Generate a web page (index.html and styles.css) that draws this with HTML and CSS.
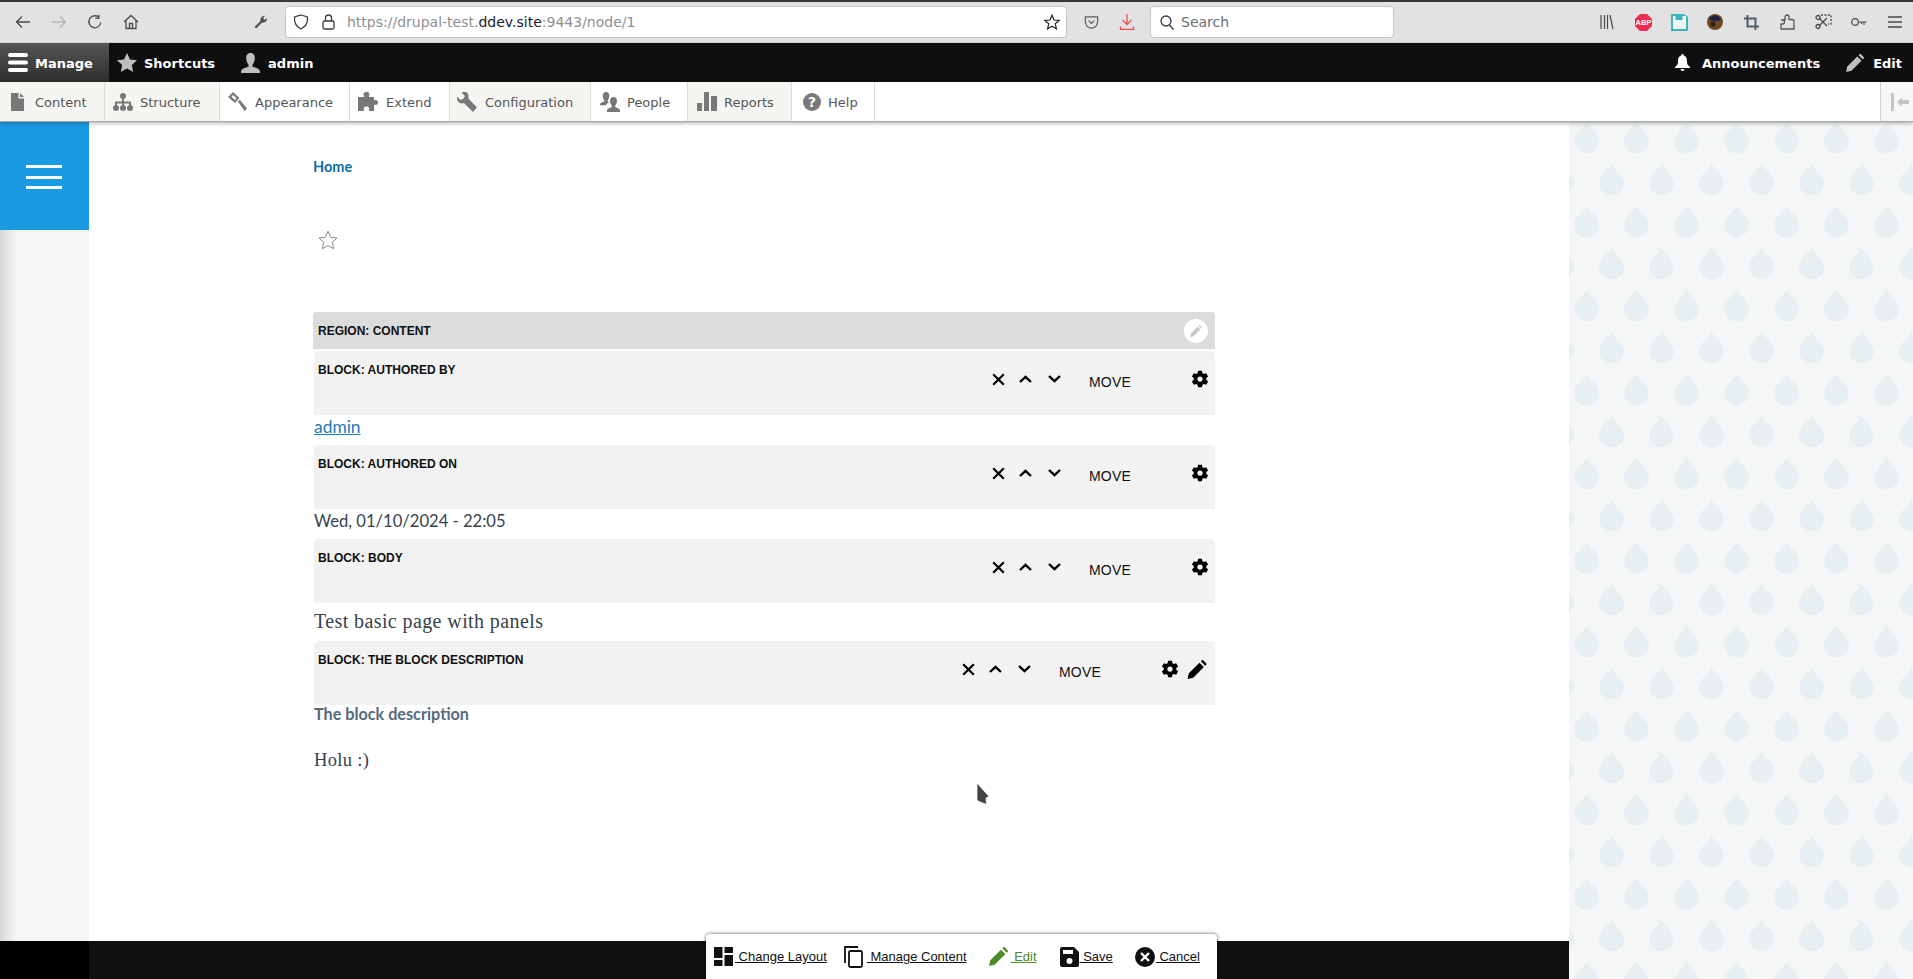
FILE: index.html
```html
<!DOCTYPE html>
<html lang="en">
<head>
<meta charset="utf-8">
<title>Test basic page with panels</title>
<link rel="stylesheet" href="styles.css">
</head>
<body>
<svg class="defs" width="0" height="0" aria-hidden="true">
  <defs>
    <symbol id="i-x" viewBox="0 0 13 13"><path d="M1.2 1.2 11.8 11.8M11.8 1.2 1.2 11.8" fill="none" stroke="#000" stroke-width="2.2"/></symbol>
    <symbol id="i-up" viewBox="0 0 13 8"><path d="M1 7 6.5 1.8 12 7" fill="none" stroke="#000" stroke-width="2.4"/></symbol>
    <symbol id="i-down" viewBox="0 0 13 8"><path d="M1 1 6.5 6.2 12 1" fill="none" stroke="#000" stroke-width="2.4"/></symbol>
    <symbol id="i-gear" viewBox="0 0 24 24"><path fill="#000" fill-rule="evenodd" d="M14.6 1h-5.2l-.6 3.2c-.7.3-1.3.6-1.9 1.1L3.8 4.2 1.2 8.7l2.5 2.1c-.1.7-.1 1.5 0 2.2l-2.5 2.2 2.6 4.5 3.1-1.1c.6.5 1.2.8 1.9 1.1l.6 3.3h5.2l.6-3.3c.7-.3 1.3-.6 1.9-1.1l3.1 1.1 2.6-4.5-2.5-2.2c.1-.7.1-1.5 0-2.2l2.5-2.1-2.6-4.500-3.100 1.100c-.6-.5-1.2-.8-1.9-1.100zM12 8.500a3.500 3.500 0 1 1 0 7 3.500 3.500 0 0 1 0-7z"/></symbol>
    <symbol id="i-pencil" viewBox="0 0 20 20"><path d="M0 20 1.4 14 12.6 2.8 17.2 7.4 6 18.6zM14 1.4 15 .4c.5-.5 1.2-.5 1.7 0l2.9 2.9c.5.5.5 1.2 0 1.7l-1 1z"/></symbol>
  </defs>
</svg>

<header class="browser">
  <div class="nav-group">
    <span class="bbtn"><svg width="16" height="16" viewBox="0 0 16 16" fill="none" stroke="#4a4a4f" stroke-width="1.3"><path d="M15 8H1.5M7 2.5 1.5 8 7 13.5"/></svg></span>
    <span class="bbtn"><svg width="16" height="16" viewBox="0 0 16 16" fill="none" stroke="#b4b4b6" stroke-width="1.3"><path d="M1 8h13.5M9 2.5 14.500 8 9 13.5"/></svg></span>
    <span class="bbtn"><svg width="16" height="16" viewBox="0 0 16 16" fill="none" stroke="#4a4a4f" stroke-width="1.3"><path d="M13.800 8.500A6 6 0 1 1 11.500 3M11.800 .8v3.500H8.300"/></svg></span>
    <span class="bbtn"><svg width="16" height="16" viewBox="0 0 16 16" fill="none" stroke="#4a4a4f" stroke-width="1.3"><path d="M1 8 8 1.500 15 8M3 6.500V14.500H13V6.500M6.500 14.500V9.500H9.500V14.500"/></svg></span>
    <span class="bbtn wrench"><svg width="14" height="14" viewBox="0 0 14 14"><path fill="#4a4a4f" d="M.5 12 6.500 6C6 3.500 7.800.8 11 .8l-2 2.400 1.800 1.800L13 3c.2 3.200-2.500 5.200-5 4.600L2 13.500z"/></svg></span>
  </div>
  <div class="urlbar">
    <svg class="ub-shield" width="16" height="16" viewBox="0 0 16 16" fill="none" stroke="#3d3d40" stroke-width="1.3"><path d="M8 1 14.500 3C15 9 12 13 8 15 4 13 1 9 1.500 3z"/></svg>
    <svg class="ub-lock" width="13" height="16" viewBox="0 0 13 16" fill="none" stroke="#3d3d40" stroke-width="1.3"><rect x="1" y="7" width="11" height="8" rx="1.500"/><path d="M3.500 7V4a3 3 0 0 1 6 0v3"/></svg>
    <span class="url">https://drupal-test.<b>ddev.site</b>:9443/node/1</span>
    <svg class="ub-star" width="16" height="16" viewBox="0 0 16 16" fill="none" stroke="#222" stroke-width="1.200"><path d="M8 1.200 10 6l5.200.4-4 3.400 1.300 5.100L8 12.200l-4.500 2.700 1.300-5.100-4-3.400L6 6z"/></svg>
  </div>
  <span class="bbtn"><svg width="15" height="15" viewBox="0 0 16 16" fill="none" stroke="#5b5b60" stroke-width="1.300"><path d="M1.500 2h13c.5 4 .500 12-6.500 12S1 6 1.500 2zM5 6l3 3 3-3"/></svg></span>
  <span class="bbtn"><svg width="16" height="16" viewBox="0 0 16 16" fill="none" stroke="#f0504a" stroke-width="1.300"><path d="M8 0v10.500M3.500 6 8 10.500 12.500 6M1.500 12.500v2.800h13v-2.800"/></svg></span>
  <div class="searchbar">
    <svg width="14" height="15" viewBox="0 0 14 15" fill="none" stroke="#3d3d40" stroke-width="1.300"><circle cx="6" cy="6" r="5"/><path d="m9.500 10 4 4.500"/></svg>
    <span class="search-text">Search</span>
  </div>
  <div class="right-group">
    <span class="bbtn"><svg width="14" height="16" viewBox="0 0 14 16" fill="none" stroke="#4a4a4f" stroke-width="1.200"><path d="M1 1v14M4.500 1v14M7.500 1v14M10 1l3 14"/></svg></span>
    <span class="bbtn"><svg width="17" height="17" viewBox="0 0 17 17"><path fill="#ee2b50" d="M5 0h7l5 5v7l-5 5H5l-5-5V5z"/><text x="8.500" y="11" class="abp">ABP</text></svg></span>
    <span class="bbtn"><svg width="17" height="17" viewBox="0 0 17 17"><path fill="#3fb5b8" d="M0 0h13l4 3v14H0z"/><rect x="2" y="2" width="13" height="13" fill="#eef6f6"/><rect x="4.500" y="0" width="7" height="6" fill="#3fb5b8"/></svg></span>
    <span class="bbtn"><svg width="16" height="16" viewBox="0 0 16 16"><circle cx="8" cy="8" r="8" fill="#6e4a24"/><path d="M2 5a7 7 0 0 1 12 0c-2 3-9 3-12 0z" fill="#1b2243"/><circle cx="6" cy="10" r="2.500" fill="#2c1d10"/></svg></span>
    <span class="bbtn"><svg width="15" height="15" viewBox="0 0 15 15" fill="none" stroke="#4e5d6c" stroke-width="2"><path d="M3.500 0v11.500H15M0 3.500h11.500V15"/></svg></span>
    <span class="bbtn"><svg width="15" height="16" viewBox="0 0 15 16" fill="none" stroke="#55555a" stroke-width="1.300"><path d="M1 15V10h1.500a2 2 0 0 0 0-4H1v0h4V3a2 2 0 0 1 4 0v2.500h3c1 0 2 1 2 2V15z"/></svg></span>
    <span class="bbtn"><svg width="17" height="16" viewBox="0 0 17 16" fill="none" stroke="#4a4a4f" stroke-width="1.300"><path d="M6 1h10v9h-3" stroke-dasharray="2 1.500"/><circle cx="3" cy="3.500" r="2"/><circle cx="3" cy="12.500" r="2"/><path d="M4.500 4.500 12 12M4.500 11.500 12 4"/></svg></span>
    <span class="bbtn"><svg width="16" height="10" viewBox="0 0 16 10" fill="none" stroke="#4a4a4f" stroke-width="1.200"><circle cx="4" cy="5" r="3.300"/><path d="M7.300 5H15.500M13 5v3M10.500 5v2"/></svg></span>
    <span class="bbtn"><svg width="14" height="12" viewBox="0 0 14 12" fill="none" stroke="#4a4a4f" stroke-width="1.300"><path d="M0 1h14M0 6h14M0 11h14"/></svg></span>
  </div>
</header>

<nav class="toolbar">
  <a class="tab tab-manage"><svg width="20" height="19" viewBox="0 0 20 19" fill="#fff"><rect y="0" width="20" height="4" rx="2"/><rect y="7.500" width="20" height="4" rx="2"/><rect y="15" width="20" height="4" rx="2"/></svg><span>Manage</span></a>
  <a class="tab tab-short"><svg width="20" height="19" viewBox="0 0 20 19" fill="#bfbfbf"><path d="M10 0l3 6.500 7 .8-5.200 4.700 1.400 7L10 15.500 3.800 19l1.400-7L0 7.300l7-.8z"/></svg><span>Shortcuts</span></a>
  <a class="tab tab-admin"><svg width="19" height="20" viewBox="0 0 19 20" fill="#bfbfbf"><path d="M9.500 0c3 0 4.300 2.300 4.300 5 0 3-1.300 5.500-2.300 6.500v2.200c3 .8 7.500 2 7.500 5V20H0v-1.300c0-3 4.500-4.200 7.500-5v-2.200C6.500 10.500 5.200 8 5.200 5c0-2.700 1.300-5 4.300-5z"/></svg><span>admin</span></a>
  <div class="tb-right">
    <a class="tab tab-ann"><svg width="15" height="17" viewBox="0 0 15 17" fill="#fff"><path d="M7.500 0c1 0 1.300.7 1.300 1.500C11.500 2.300 12 5 12 8c0 2 1 3.500 3 5v1H0v-1c2-1.500 3-3 3-5 0-3 .5-5.700 3.200-6.500C6.200.7 6.500 0 7.500 0zM5.500 15h4a2 2 0 0 1-4 0z"/></svg><span>Announcements</span></a>
    <a class="tab tab-edit"><svg width="18" height="18" viewBox="0 0 20 20" fill="#bfbfbf"><use href="#i-pencil"/></svg><span>Edit</span></a>
  </div>
</nav>

<nav class="tray">
  <a class="item item-content alt"><svg width="13" height="18" viewBox="0 0 13 18" fill="#787878"><path d="M0 0h7.500v5.500H13V18H0zM9 0l4 4H9z"/></svg><span>Content</span></a>
  <a class="item item-structure alt"><svg width="20" height="18" viewBox="0 0 20 18" fill="#787878"><circle cx="10" cy="3" r="3"/><path d="M9 5h2v3.500h7V13h-2v-2.500h-5V13H9v-2.500H4V13H2V8.500h7z"/><circle cx="3" cy="15" r="3"/><circle cx="10" cy="15" r="3"/><circle cx="17" cy="15" r="3"/></svg><span>Structure</span></a>
  <a class="item item-appearance"><svg width="19" height="19" viewBox="0 0 19 19" fill="#787878"><path d="M5 0 11.500 6 7 11 0 5zM3.500 4.800 7 8l1.500-1.700L5 3zM10 9.500l1.800-1.700L19 16.500 16.500 19z"/></svg><span>Appearance</span></a>
  <a class="item item-extend"><svg width="20" height="19" viewBox="0 0 20 19" fill="#787878"><path d="M0 5h6V3.500C4.500 2 6 0 8.500 0S12.500 2 11 3.500V5h5v3.500c1.500-1 4-.5 4 2s-2.500 3-4 2V19h-5v-1.500c1-1.500-.5-3-2.500-3S5 16 6 17.500V19H0z"/></svg><span>Extend</span></a>
  <a class="item item-config alt"><svg width="20" height="20" viewBox="0 0 20 20" fill="#787878"><path d="M0 4.500 3.500 8l3-1.500L8 4 4.500.5C7-.7 10-.3 11 2c.7 1.500.5 3 .2 4.300L20 15.500 16 20l-9-9C5 11.800 3 11.500 1.500 10 0 8.500-.5 6.500 0 4.500z"/></svg><span>Configuration</span></a>
  <a class="item item-people"><svg width="20" height="20" viewBox="0 0 20 20" fill="#787878"><path d="M6 0c2.500 0 3.300 1.800 3.300 3.800 0 2-.8 3.700-1.500 4.500v1.500l1.500.5c-1.500.7-3 1.500-3.300 3H0v-1c0-1.500 2.500-2.300 4.300-2.800V8.300C3.500 7.500 2.800 5.800 2.800 3.800 2.800 1.800 3.500 0 6 0z"/><path d="M13.500 5c2.500 0 3.500 1.800 3.500 3.800 0 2-.9 3.800-1.700 4.700v1.700c2 .6 4.700 1.400 4.700 3.300v1.500H7v-1.500c0-1.900 2.700-2.700 4.700-3.300v-1.700c-.8-.9-1.700-2.700-1.700-4.700C10 6.800 11 5 13.500 5z"/></svg><span>People</span></a>
  <a class="item item-reports alt"><svg width="20" height="19" viewBox="0 0 20 19" fill="#787878"><rect y="11" width="5" height="8"/><rect x="7" y="0" width="5" height="19"/><rect x="14" y="4" width="6" height="15"/></svg><span>Reports</span></a>
  <a class="item item-help"><svg width="18" height="18" viewBox="0 0 18 18"><circle cx="9" cy="9" r="9" fill="#787878"/><text x="9" y="14" class="qm">?</text></svg><span>Help</span></a>
  <div class="tray-toggle"><svg width="18" height="18" viewBox="0 0 18 18" fill="#c4c4c4"><rect x="0" y="0" width="3" height="18"/><path d="M6 9l5-5v3h7v4h-7v3z"/></svg></div>
</nav>

<div class="page">
  <div class="page-left">
    <div class="page-row">
      <aside class="sidebar">
        <div class="burger"><i></i><i></i><i></i></div>
      </aside>
      <main class="main">
        <a class="crumb">Home</a>
        <svg class="fav" width="20" height="20" viewBox="0 0 20 20" fill="none" stroke="#8a8a8a" stroke-width="1"><path d="M10 1.200 12.600 7.300 19 8l-4.800 4.300 1.400 6.500L10 15.500 4.400 18.800l1.400-6.500L1 8l6.400-.7z"/></svg>

        <section class="editor">
          <div class="region"><span>Region: Content</span>
            <span class="region-edit"><svg width="12" height="12" viewBox="0 0 20 20" fill="#c9c9c9"><use href="#i-pencil"/></svg></span>
          </div>

          <div class="block">
            <h3 class="block-title">Block: Authored by</h3>
            <div class="ctrls">
              <svg class="c-x"><use href="#i-x"/></svg><svg class="c-up"><use href="#i-up"/></svg><svg class="c-down"><use href="#i-down"/></svg><span class="move">MOVE</span><svg class="c-gear"><use href="#i-gear"/></svg>
            </div>
          </div>
          <div class="field field-link"><a>admin</a></div>

          <div class="block">
            <h3 class="block-title">Block: Authored on</h3>
            <div class="ctrls">
              <svg class="c-x"><use href="#i-x"/></svg><svg class="c-up"><use href="#i-up"/></svg><svg class="c-down"><use href="#i-down"/></svg><span class="move">MOVE</span><svg class="c-gear"><use href="#i-gear"/></svg>
            </div>
          </div>
          <div class="field field-date">Wed, 01/10/2024 - 22:05</div>

          <div class="block">
            <h3 class="block-title">Block: Body</h3>
            <div class="ctrls">
              <svg class="c-x"><use href="#i-x"/></svg><svg class="c-up"><use href="#i-up"/></svg><svg class="c-down"><use href="#i-down"/></svg><span class="move">MOVE</span><svg class="c-gear"><use href="#i-gear"/></svg>
            </div>
          </div>
          <div class="field field-body">Test basic page with panels</div>

          <div class="block block-wide">
            <h3 class="block-title">Block: The block description</h3>
            <div class="ctrls">
              <svg class="c-x"><use href="#i-x"/></svg><svg class="c-up"><use href="#i-up"/></svg><svg class="c-down"><use href="#i-down"/></svg><span class="move">MOVE</span><svg class="c-gear"><use href="#i-gear"/></svg><svg class="c-pen"><use href="#i-pencil"/></svg>
            </div>
          </div>
          <h2 class="desc-title">The block description</h2>
          <p class="desc-body">Holu :)</p>
        </section>
      </main>
    </div>
    <footer class="footbar">
      <div class="foot-side"></div>
      <div class="foot-main"></div>
    </footer>
  </div>
  <div class="pattern"></div>
</div>

<div class="panel">
  <a class="pa pa-layout"><svg width="19" height="19" viewBox="0 0 19 19" fill="#111"><rect width="8.500" height="11"/><rect x="10.500" width="8.500" height="6"/><rect x="10.500" y="8" width="8.500" height="11"/><rect y="13" width="8.500" height="6"/></svg><span> Change Layout</span></a>
  <a class="pa pa-content"><svg width="19" height="22" viewBox="0 0 19 22" fill="none" stroke="#111" stroke-width="1.800"><path d="M1 17V1h13"/><rect x="5" y="5" width="13" height="16" rx="1.500"/></svg><span> Manage Content</span></a>
  <a class="pa pa-edit"><svg width="19" height="19" viewBox="0 0 20 20" fill="#4e8a26"><use href="#i-pencil"/></svg><span> Edit</span></a>
  <a class="pa pa-save"><svg width="19" height="20" viewBox="0 0 19 20" fill="#111"><path fill-rule="evenodd" d="M2 0h12l5 5v13a2 2 0 0 1-2 2H2a2 2 0 0 1-2-2V2a2 2 0 0 1 2-2zm1 3v4h10V3zm6.500 8a3 3 0 1 0 0 6 3 3 0 0 0 0-6z"/></svg><span> Save</span></a>
  <a class="pa pa-cancel"><svg width="20" height="20" viewBox="0 0 20 20"><circle cx="10" cy="10" r="10" fill="#111"/><path d="M6 6l8 8M14 6l-8 8" stroke="#fff" stroke-width="2.400"/></svg><span> Cancel</span></a>
</div>

<svg class="cursor" width="14" height="24" viewBox="0 0 14 24"><path d="M1 1 13 14.500 10 16 10.500 22.500 3 19.500 1 18z" fill="#444" stroke="#fff" stroke-opacity=".7" stroke-width="1"/></svg>
</body>
</html>
```

FILE: styles.css
```css
* { box-sizing: border-box; }
html, body { margin: 0; padding: 0; }
body {
  width: 1913px;
  height: 979px;
  overflow: hidden;
  display: flex;
  flex-direction: column;
  position: relative;
  background: #fff;
  font-family: "DejaVu Sans", sans-serif;
}
a { text-decoration: none; color: inherit; }
.defs { position: absolute; }

/* Browser chrome */
.browser {
  height: 43px;
  flex: none;
  background: #e2e2e2;
  border-top: 2px solid #38383a;
  border-bottom: 1px solid #cfcfcf;
  display: flex;
  align-items: center;
  padding-left: 5px;
}
.nav-group { display: flex; align-items: center; }
.bbtn {
  width: 36px;
  height: 32px;
  flex: none;
  display: flex;
  align-items: center;
  justify-content: center;
}
.wrench { margin-left: 94px; }
.urlbar, .searchbar {
  height: 32px;
  background: #fff;
  border: 1px solid #c6c6c6;
  border-radius: 4px;
  display: flex;
  align-items: center;
}
.urlbar { width: 782px; margin-left: 6px; margin-right: 6px; padding-left: 7px; }
.ub-lock { margin-left: 13px; }
.url { margin-left: 12px; font-size: 14px; color: #8f8f92; white-space: nowrap; }
.url b { font-weight: 400; color: #1b1b1f; }
.ub-star { margin-left: auto; margin-right: 6px; }
.searchbar { width: 244px; margin-left: 5px; padding-left: 9px; }
.search-text { margin-left: 7px; font-size: 14px; color: #6e6e73; }
.right-group { margin-left: auto; display: flex; align-items: center; }
.abp { font: 700 7.500px "Liberation Sans", sans-serif; fill: #fff; text-anchor: middle; }

/* Admin toolbar */
.toolbar {
  height: 39px;
  flex: none;
  background: #0f0f0f;
  display: flex;
  color: #fff;
  font-size: 13px;
  font-weight: 700;
}
.tab { display: flex; align-items: center; height: 39px; }
.tab span { padding-top: 2px; }
.tab-manage {
  width: 109px;
  padding-left: 8px;
  background: linear-gradient(#555, #2f2f2f);
}
.tab-manage span { margin-left: 7px; }
.tab-short { margin-left: 8px; }
.tab-short span { margin-left: 7px; }
.tab-admin { margin-left: 26px; }
.tab-admin span { margin-left: 8px; }
.tb-right { margin-left: auto; display: flex; padding-right: 11px; }
.tab-ann span { margin-left: 12px; }
.tab-edit { margin-left: 26px; }
.tab-edit span { margin-left: 9px; }

/* Tray */
.tray {
  height: 40px;
  flex: none;
  background: #fff;
  border-bottom: 1px solid #a8a8a8;
  box-shadow: 0 1px 4px rgba(0, 0, 0, .35);
  display: flex;
  position: relative;
  z-index: 2;
  font-size: 13px;
  color: #565656;
}
.item {
  display: flex;
  align-items: center;
  border-right: 1px solid #dcdcdc;
  padding-left: 11px;
}
.item.alt { background: #f5f5f2; }
.item span { margin-left: 11px; padding-top: 2px; }
.item-content { width: 105px; }
.item-structure { width: 115px; padding-left: 8px; }
.item-structure span { margin-left: 7px; }
.item-appearance { width: 130px; padding-left: 8px; }
.item-appearance span { margin-left: 8px; }
.item-extend { width: 100px; padding-left: 8px; }
.item-extend span { margin-left: 8px; }
.item-config { width: 141px; padding-left: 7px; }
.item-config span { margin-left: 8px; }
.item-people { width: 97px; padding-left: 9px; }
.item-people span { margin-left: 7px; }
.item-reports { width: 104px; padding-left: 9px; }
.item-reports span { margin-left: 7px; }
.item-help { width: 83px; padding-left: 11px; }
.item-help span { margin-left: 7px; }
.qm { font: 700 14px "DejaVu Sans", sans-serif; fill: #fff; text-anchor: middle; }
.tray-toggle {
  margin-left: auto;
  width: 33px;
  border-left: 1px solid #d0d0d0;
  display: flex;
  align-items: center;
  justify-content: flex-end;
  padding-right: 4px;
  background: #f7f7f7;
}

/* Page */
.page { flex: 1; display: flex; min-height: 0; }
.page-left { width: 1569px; flex: none; display: flex; flex-direction: column; }
.page-row { flex: 1; display: flex; min-height: 0; }
.sidebar {
  width: 89px;
  flex: none;
  background: linear-gradient(90deg, #d6d6d6 0, #f1f3f2 14px, #f5f7f6 20px);
}
.burger {
  height: 108px;
  background: #1b9ae4;
  display: flex;
  flex-direction: column;
  gap: 7.500px;
  padding: 43px 27px 0 26px;
}
.burger i { display: block; height: 3px; background: #fff; }
.main { flex: 1; background: #fff; padding: 37px 0 0 224px; }
.crumb {
  display: block;
  font: 700 14.500px/16px Lato, sans-serif;
  color: #0d6fa6;
}
.fav { display: block; margin: 55px 0 0 5px; }
.editor { width: 901px; margin: 62px 0 0 1px; }
.region {
  height: 37px;
  background: #dcdcdc;
  border-radius: 3px 3px 0 0;
  display: flex;
  align-items: center;
  justify-content: space-between;
  padding: 0 7px 0 5px;
  font: 700 12px "Liberation Sans", sans-serif;
  text-transform: uppercase;
  color: #111;
  margin: 0 0 2px -1px;
}
.region-edit {
  width: 24px;
  height: 24px;
  border-radius: 50%;
  background: #fff;
  display: flex;
  align-items: center;
  justify-content: center;
}
.block {
  height: 64px;
  background: #f2f2f2;
  border-radius: 5px 5px 0 0;
  display: flex;
  justify-content: space-between;
  padding: 13px 6px 0 4px;
}
.block-wide { padding-right: 8px; }
.block-title {
  margin: 0;
  font: 700 12px/13px "Liberation Sans", sans-serif;
  text-transform: uppercase;
  color: #111;
}
.ctrls { display: flex; align-items: flex-start; }
.ctrls svg { flex: none; }
.c-x { width: 13px; height: 13px; margin-top: 9px; }
.c-up { width: 13px; height: 8px; margin: 11px 0 0 14px; }
.c-down { width: 13px; height: 8px; margin: 11px 0 0 16px; }
.move {
  margin: 10px 0 0 28px;
  width: 41px;
  font: 400 14px/16px "Liberation Sans", sans-serif;
  letter-spacing: .2px;
  color: #111;
}
.c-gear { width: 18px; height: 18px; margin: 6px 0 0 61px; }
.c-pen { width: 20px; height: 19px; margin: 6px 0 0 8px; }

.field { color: #37424d; }
.field-link {
  height: 30px;
  font: 400 17.400px/24px Lato, sans-serif;
}
.field-link a { color: #1a7ab8; text-decoration: underline; }
.field-date {
  height: 30px;
  font: 400 16.600px/24px Lato, sans-serif;
}
.field-body {
  height: 38px;
  font: 400 20px/37px "Liberation Serif", serif;
  letter-spacing: .4px;
}
.desc-title {
  margin: 0;
  padding-top: 0;
  font: 700 16.200px/18px Lato, sans-serif;
  color: #566a7c;
}
.desc-body {
  margin: 25px 0 0;
  font: 400 18.500px/24px "Liberation Serif", serif;
  letter-spacing: .35px;
  color: #37424d;
}

/* Bottom bar */
.footbar { height: 38px; flex: none; display: flex; }
.foot-side { width: 89px; background: #000; }
.foot-main { flex: 1; background: #101113; }

/* Droplet pattern */
.pattern {
  flex: 1;
  background-color: #f5f7f7;
  background-image: url("data:image/svg+xml,%3Csvg xmlns='http://www.w3.org/2000/svg' width='50' height='84'%3E%3Cdefs%3E%3Cpath id='d' fill='%23e8eff3' d='M12.500 0C14 5 25 12 25 20a12.500 12.500 0 0 1-25 0C0 12 11 5 12.500 0z'/%3E%3C/defs%3E%3Cuse href='%23d' x='5' y='-1'/%3E%3Cuse href='%23d' x='5' y='83'/%3E%3Cuse href='%23d' x='30' y='41'/%3E%3Cuse href='%23d' x='-20' y='41'/%3E%3C/svg%3E");
  background-size: 50px 84px;
}

/* Floating edit panel */
.panel {
  position: absolute;
  left: 706px;
  top: 934px;
  width: 511px;
  height: 45px;
  background: #fff;
  border-radius: 4px 4px 0 0;
  box-shadow: 0 0 3px 1px rgba(0, 0, 0, .4);
  display: flex;
  align-items: center;
  padding-left: 8px;
  font: 400 13px "Liberation Sans", sans-serif;
  color: #111;
  z-index: 3;
}
.pa { display: flex; align-items: center; }
.pa span { text-decoration: underline; white-space: pre; }
.pa svg { flex: none; }
.pa-layout span { margin-left: 2px; }
.pa-content { margin-left: 17px; }
.pa-content span { margin-left: 4px; }
.pa-edit { margin-left: 22px; color: #4e8a26; }
.pa-edit span { margin-left: 3px; }
.pa-save { margin-left: 23px; }
.pa-save span { margin-left: 1px; }
.pa-cancel { margin-left: 22px; }
.pa-cancel span { margin-left: 1px; }

.cursor { position: absolute; left: 976px; top: 782px; z-index: 4; }
```
